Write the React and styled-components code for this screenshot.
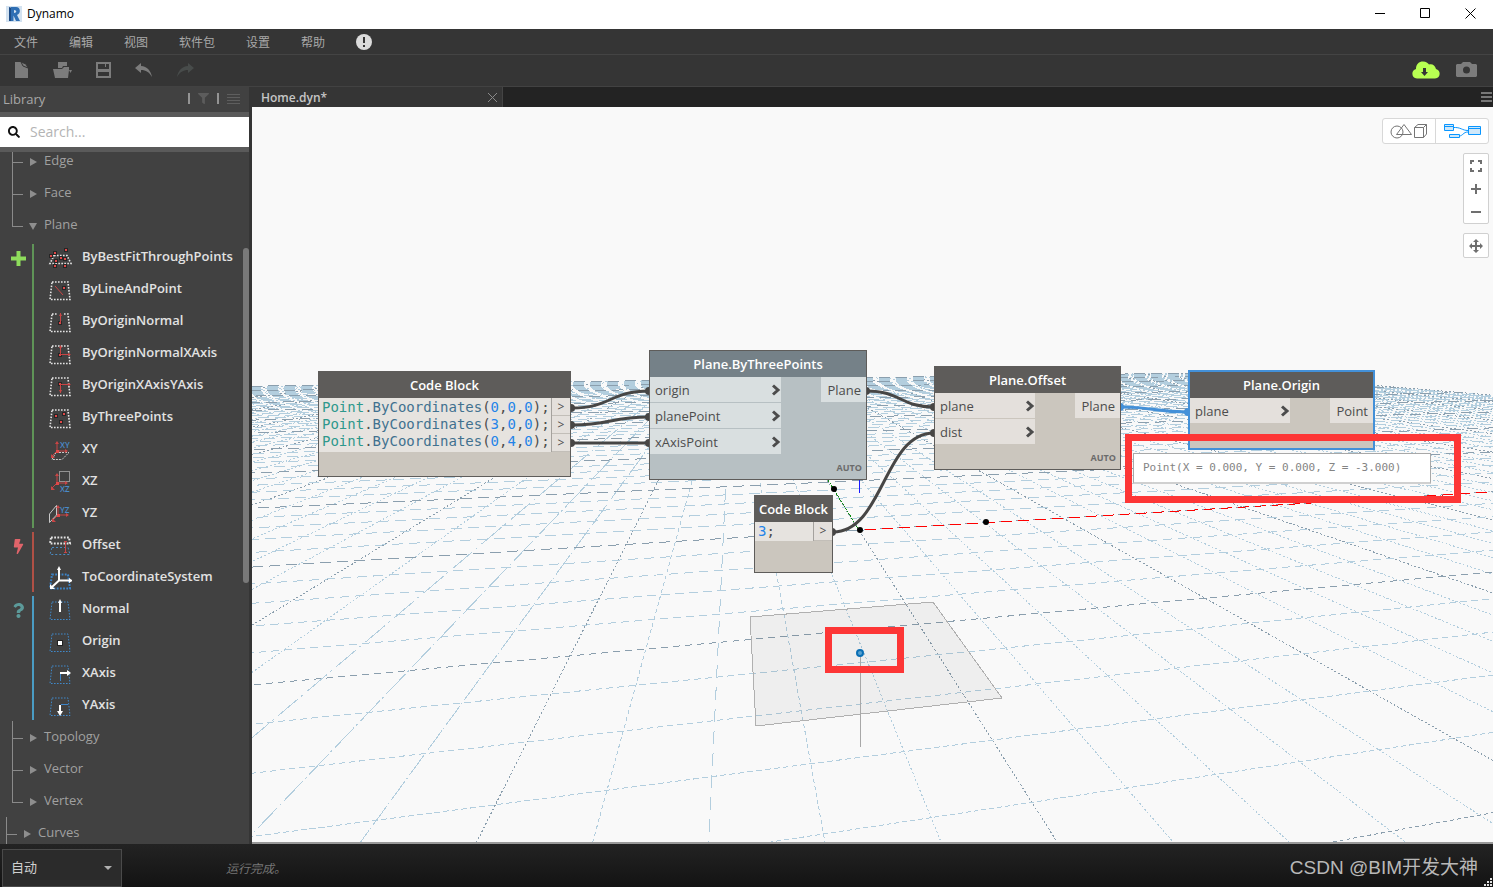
import styled, { createGlobalStyle } from "styled-components";
import { FaSearch, FaFilter, FaPlus, FaBolt, FaQuestion } from "react-icons/fa";

const LIGHT = "#b3cede";
const DARK = "#8b9fae";

const PROJ = { w0: 0.005043, wx: 0.000067, wy: 0.0003241, vx: 3878, vy: 481 };
const HORIZON = 225;

// grid plane -> canvas
function project(x, y) {
  const w = PROJ.w0 + PROJ.wx * x + PROJ.wy * y;
  const num = 607 * PROJ.w0 + x * PROJ.wx * PROJ.vx + y * PROJ.wy * PROJ.vy;
  return [num / w, HORIZON + 1 / w];
}

const steepDash = {
  "-3": "13 9",
  "-2": "4 3",
  "-4": "4 3",
  "-6": "24 4 1 2",
  "-7": "28 4 2 3",
  "-8": "26 6 2 4",
};

function buildGrid() {
  const lines = [];
  for (let k = -50; k <= 50; k++) {
    const yNear = (0.0018 - PROJ.w0 - PROJ.wx * k) / PROJ.wy;
    const [x1, y1] = project(k, 50);
    const [x2, y2] = project(k, yNear);
    lines.push({
      id: "x" + k,
      x1,
      y1,
      x2,
      y2,
      dash: k % 5 !== 0 && steepDash[k] ? steepDash[k] : "2 2",
      offset: 0,
      major: k % 5 === 0,
    });
  }
  for (let j = -12; j <= 50; j++) {
    const xNear = Math.max(-50, (0.0015 - PROJ.w0 - PROJ.wy * j) / PROJ.wx);
    if (xNear > 49) continue;
    const [x1, y1] = project(50, j);
    const [x2, y2] = project(xNear, j);
    const period = Math.min(17, 17 + j);
    const on = Math.round(period * 0.62);
    lines.push({
      id: "y" + j,
      x1,
      y1,
      x2,
      y2,
      dash: `${on} ${period - on}`,
      offset: (j + 12) * 7,
      major: j % 5 === 0,
    });
  }
  return lines;
}

const gridLines = buildGrid();

const wires = [
  [320, 301, 397, 284],
  [320, 318, 397, 310],
  [320, 336, 397, 336],
  [615, 284, 682, 300],
  [581, 425, 682, 326],
  [869, 300, 936, 305, "#4390d8"],
];

function Wire({ points }) {
  const [x1, y1, x2, y2, color = "#474645"] = points;
  const mid = (x2 - x1) / 2;
  return (
    <g fill={color}>
      <path
        d={`M${x1} ${y1} C${x1 + mid} ${y1} ${x2 - mid} ${y2} ${x2} ${y2}`}
        fill="none"
        stroke={color}
        strokeWidth="3"
      />
      <path d={`M${x1 - 1} ${y1 - 4}a4 4 0 0 1 0 8z`} />
      <path d={`M${x2} ${y2 - 4}a4 4 0 0 0 0 8z`} />
    </g>
  );
}

function Scene() {
  return (
    <SceneSvg>
      <g shapeRendering="crispEdges">
        {gridLines.map((l) => (
          <line
            key={l.id}
            x1={l.x1}
            y1={l.y1}
            x2={l.x2}
            y2={l.y2}
            stroke={l.major ? DARK : LIGHT}
            strokeDasharray={l.dash}
            strokeDashoffset={l.offset}
          />
        ))}
        <polygon
          points="498,510 681,495 750,591 504,619"
          fill="#000000"
          fillOpacity="0.045"
          stroke="#b0b0b0"
        />
        <path d="M608 548V640" stroke="#a8a8a8" />
        <path d="M607 373V386" stroke="#1a1aff" />
        <path d="M576 373L607 423" stroke="#0a8a0a" strokeDasharray="2 1" />
        <path d="M613 423L1241 385" stroke="#ff0000" strokeDasharray="11 6" />
      </g>
      <g fill="#000000">
        <circle cx="582" cy="382" r="3" />
        <circle cx="608" cy="423" r="3" />
        <circle cx="734" cy="415" r="3" />
      </g>
      <circle cx="608" cy="546" r="3" fill="#5aa2cf" stroke="#0a6fb5" strokeWidth="2" />
      {wires.map((w) => (
        <Wire key={w.join()} points={w} />
      ))}
    </SceneSvg>
  );
}

const IconText = styled.text`
  fill: #4a8ac8;
  font-size: 8px;
  font-weight: 600;
`;

function Frame({ color = "#e4e4e4", width = 1.6 }) {
  return (
    <path
      d="M4 4H20L22 21.500H2z"
      fill="none"
      stroke={color}
      strokeWidth={width}
      strokeDasharray="1.6 1.4"
    />
  );
}

function Dots({ at }) {
  return at.map(([x, y]) => (
    <g key={x + "," + y}>
      <rect x={x - 2} y={y - 2} width="4" height="4" fill="#262626" />
      <rect x={x - 1} y={y - 1} width="2" height="2" fill="#e04848" />
    </g>
  ));
}

const red = { stroke: "#c94545", strokeWidth: 1, fill: "none" };

function Tripod({ x, y }) {
  return (
    <g>
      <path d={`M${x} ${y - 9}V${y}H${x + 10}M${x} ${y}l-5 5`} {...red} />
      <path
        d={`M${x - 2} ${y - 7}l2-3 2 3zM${x + 8} ${y - 2}l3 2-3 2zM${x - 6} ${y + 3}v4h4z`}
        fill="#c94545"
      />
      <rect x={x - 1} y={y - 1} width="3" height="3" fill="#e04848" />
    </g>
  );
}

const itemIcons = {
  ByBestFitThroughPoints: (
    <>
      <path
        d="M6 9.500H19L23 17.500H2z"
        fill="none"
        stroke="#e4e4e4"
        strokeWidth="1.6"
        strokeDasharray="1.6 1.4"
      />
      <Dots at={[[18, 4], [7, 7], [3, 10], [13, 12], [17, 13], [8, 15], [7, 20], [17, 20]]} />
    </>
  ),
  ByLineAndPoint: (
    <>
      <Frame />
      <path d="M7 8L15 17" {...red} />
      <Dots at={[[16, 10]]} />
    </>
  ),
  ByOriginNormal: (
    <>
      <Frame />
      <rect x="10" y="0" width="5" height="8" fill="#414141" />
      <Dots at={[[12, 13]]} />
      <path d="M12.500 3V13" {...red} />
      <path d="M11 6l1.500-3L14 6z" fill="#c94545" />
    </>
  ),
  ByOriginNormalXAxis: (
    <>
      <Frame />
      <Dots at={[[12, 13]]} />
      <path d="M12.500 4V12.500H21" {...red} />
      <path d="M11 6l1.500-3L14 6zM20 11l3 1.500-3 1.500z" fill="#c94545" />
    </>
  ),
  ByOriginXAxisYAxis: (
    <>
      <Frame />
      <Dots at={[[12, 10]]} />
      <path d="M12.500 19V10.500H21" {...red} />
      <path d="M11 16l1.500 3L14 16zM20 9l3 1.500-3 1.500z" fill="#c94545" />
    </>
  ),
  ByThreePoints: (
    <>
      <Frame />
      <Dots at={[[8, 10], [16, 8], [13, 16]]} />
    </>
  ),
  XY: (
    <>
      <path d="M8 14.500H21L14 21.500H4z" fill="none" stroke="#c8c8c8" strokeDasharray="2 1" />
      <Tripod x={9} y={13} />
      <IconText x="12" y="10">XY</IconText>
    </>
  ),
  XZ: (
    <>
      <path d="M11.500 1.500H21.500V11.500H11.500z" fill="none" stroke="#e4e4e4" strokeDasharray="1 1" />
      <Tripod x={9} y={13} />
      <IconText x="12" y="22">XZ</IconText>
    </>
  ),
  YZ: (
    <>
      <path d="M1.500 12L8.500 3.500V13L1.500 20.500z" fill="none" stroke="#c8c8c8" />
      <Tripod x={10} y={13} />
      <IconText x="12" y="11">YZ</IconText>
    </>
  ),
  Offset: (
    <>
      <path d="M4 13.500H20L22 20.500H2z" fill="none" stroke="#4a8ac0" strokeDasharray="2 2" />
      <path
        d="M3 3.500H21L22 9.500H2z"
        fill="none"
        stroke="#e4e4e4"
        strokeWidth="2"
        strokeDasharray="1.800 1.400"
      />
      <path d="M17.500 7V18M16 7.500H19M16 18.500H19" {...red} />
    </>
  ),
  ToCoordinateSystem: (
    <>
      <path
        d="M4 8.500H20L22 22.500H2z"
        fill="none"
        stroke="#3c84c8"
        strokeWidth="2"
        strokeDasharray="1.800 1.400"
      />
      <path d="M11 3V14.500H22M11 14.500L4 21" fill="none" stroke="#ffffff" strokeWidth="2" />
      <path d="M9 4l2-4 2 4zM21 12l4 2.500-4 2.500zM2 23v-5l5 5z" fill="#ffffff" />
    </>
  ),
  Normal: (
    <>
      <Frame color="#4088c8" width={1} />
      <path d="M12 4V14" stroke="#ffffff" strokeWidth="2" />
      <path d="M10 5l2-4 2 4z" fill="#ffffff" />
    </>
  ),
  Origin: (
    <>
      <Frame color="#4088c8" width={1} />
      <rect x="9" y="10" width="6" height="6" fill="#222222" />
      <rect x="10" y="11" width="4" height="4" fill="#ffffff" />
    </>
  ),
  XAxis: (
    <>
      <Frame color="#4088c8" width={1} />
      <path d="M12.500 12V19" stroke="#3c84c8" />
      <path d="M12 11H20" stroke="#ffffff" strokeWidth="2" />
      <path d="M19 8l4 3-4 3z" fill="#ffffff" />
    </>
  ),
  YAxis: (
    <>
      <Frame color="#4088c8" width={1} />
      <path d="M13 10.500H20" stroke="#3c84c8" />
      <path d="M12 11V18" stroke="#ffffff" strokeWidth="2" />
      <path d="M9 17l3 5 3-5z" fill="#ffffff" />
    </>
  ),
};

const groups = [
  {
    color: "#5f9457",
    sign: (
      <svg width="15" height="15" viewBox="0 0 15 15" stroke="#8edc5c" strokeWidth="4">
        <path d="M7.500 0V15M0 7.500H15" />
      </svg>
    ),
    items: [
      "ByBestFitThroughPoints",
      "ByLineAndPoint",
      "ByOriginNormal",
      "ByOriginNormalXAxis",
      "ByOriginXAxisYAxis",
      "ByThreePoints",
      "XY",
      "XZ",
      "YZ",
    ],
  },
  {
    color: "#b05045",
    sign: <FaBolt size={15} color="#e0646a" />,
    items: ["Offset", "ToCoordinateSystem"],
  },
  {
    color: "#4a9cc4",
    sign: <FaQuestion size={15} color="#5c9a9a" />,
    items: ["Normal", "Origin", "XAxis", "YAxis"],
  },
];

function Category({ name, open, last, root }) {
  return (
    <CategoryRow $root={root}>
      <Branch $last={last} />
      <svg width="10" height="10" viewBox="0 0 10 10" fill="#8e8e8e">
        <path d={open ? "M0 2H8L4 9z" : "M1 1L8 5 1 9z"} />
      </svg>
      {name}
    </CategoryRow>
  );
}

function Library() {
  return (
    <Sidebar>
      <LibraryHeader>
        <LibraryTitle>Library</LibraryTitle>
        <HeaderBar />
        <FaFilter size={11} color="#5c5c5c" />
        <HeaderBar />
        <svg width="13" height="10" viewBox="0 0 13 10">
          <path d="M0 .5H13M0 3.500H13M0 6.500H13M0 9.500H13" stroke="#5e5e5e" />
        </svg>
      </LibraryHeader>
      <SearchBox>
        <FaSearch size={12} color="#111111" />
        <input type="text" aria-label="Search" placeholder="Search..." />
      </SearchBox>
      <Tree>
        <TreeContent>
          <Category name="Edge" />
          <Category name="Face" />
          <Category name="Plane" open last />
          {groups.map((g) => (
            <Group key={g.color}>
              <Sign>{g.sign}</Sign>
              <GroupBar $color={g.color} />
              <Items>
                {g.items.map((item) => (
                  <Item key={item}>
                    <svg width="24" height="24" viewBox="0 0 24 24">
                      {itemIcons[item]}
                    </svg>
                    {item}
                  </Item>
                ))}
              </Items>
            </Group>
          ))}
          <Category name="Topology" />
          <Category name="Vector" />
          <Category name="Vertex" last />
          <Category name="Curves" root />
        </TreeContent>
        <ScrollThumb />
      </Tree>
    </Sidebar>
  );
}

function Port({ name, width }) {
  return (
    <InPort $width={width}>
      {name}
      <svg width="9" height="12" viewBox="0 0 9 12">
        <path d="M1 1.500L6 6 1 10.500" fill="none" stroke="#4c4c4c" strokeWidth="3" />
      </svg>
    </InPort>
  );
}

function FunctionNode({ title, inputs, output, auto, portWidth = 100, ...rest }) {
  return (
    <Node {...rest}>
      <NodeTitle>{title}</NodeTitle>
      <Ports>
        <PortColumn>
          {inputs.map((name) => (
            <Port key={name} name={name} width={portWidth} />
          ))}
        </PortColumn>
        <OutPort>{output}</OutPort>
      </Ports>
      {auto && <Auto>AUTO</Auto>}
    </Node>
  );
}

function PointCall({ args }) {
  return (
    <div>
      <Code $c="#2e988c">Point</Code>.<Code $c="#41718f">ByCoordinates</Code>(
      {args.map((a, i) => (
        <span key={i}>
          {i > 0 && ","}
          <Code $c="#2484e8">{a}</Code>
        </span>
      ))}
      );
    </div>
  );
}

function Workspace() {
  return (
    <Canvas>
      <Scene />
      <Node $x={66} $y={264} $w={253} $h={106}>
        <NodeTitle>Code Block</NodeTitle>
        <CodeRow>
          <CodeText>
            <PointCall args={[0, 0, 0]} />
            <PointCall args={[3, 0, 0]} />
            <PointCall args={[0, 4, 0]} />
          </CodeText>
          <CodePorts>
            <span>&gt;</span>
            <span>&gt;</span>
            <span>&gt;</span>
          </CodePorts>
        </CodeRow>
      </Node>
      <FunctionNode
        $x={397}
        $y={243}
        $w={218}
        $h={130}
        $frozen
        title="Plane.ByThreePoints"
        inputs={["origin", "planePoint", "xAxisPoint"]}
        output="Plane"
        portWidth={131}
        auto
      />
      <Node $x={502} $y={388} $w={79} $h={78}>
        <NodeTitle>Code Block</NodeTitle>
        <CodeRow>
          <CodeText>
            <Code $c="#2484e8">3</Code>;
          </CodeText>
          <CodePorts>
            <span>&gt;</span>
          </CodePorts>
        </CodeRow>
      </Node>
      <FunctionNode
        $x={682}
        $y={259}
        $w={187}
        $h={104}
        title="Plane.Offset"
        inputs={["plane", "dist"]}
        output="Plane"
        auto
      />
      <FunctionNode
        $x={937}
        $y={264}
        $w={185}
        $h={78}
        $selected
        title="Plane.Origin"
        inputs={["plane"]}
        output="Point"
      />
      <Preview>Point(X = 0.000, Y = 0.000, Z = -3.000)</Preview>
      <Marker $x={873} $y={327} $w={336} $h={69} />
      <Marker $x={573} $y={520} $w={79} $h={46} />
      <ViewControls>
        <ModeSwitch>
          <button aria-label="3D preview">
            <svg width="38" height="16" viewBox="0 0 38 16" fill="none" stroke="#757575">
              <circle cx="7" cy="9" r="6" />
              <path d="M14 1.500L21.500 11.500H6.500zM24.500 4.500H33.500V14.500H24.500zM24.500 4.500L28 1.500H36.500L33.500 4.500M36.500 1.500V11L33.500 14.500" />
            </svg>
          </button>
          <button aria-label="Graph view">
            <svg width="38" height="16" viewBox="0 0 38 16" fill="#cfe8fa" stroke="#0a96ff">
              <path d="M10 4.500C18 4 19 7.500 25 7.500M16 13C20 13 20 9 25 9" fill="none" />
              <path d="M1.500 1.500H10.500V7.500H1.500zM1.500 3.500H10.500M6.500 11.500H16.500V14.500H6.500zM25.500 3.500H37.500V11.500H25.500zM25.500 5.500H37.500" />
            </svg>
          </button>
        </ModeSwitch>
        <ZoomPanel>
          <button aria-label="Fit">
            <svg width="14" height="14" viewBox="0 0 14 14" fill="none" stroke="#6f6f6f" strokeWidth="2">
              <path d="M2 5V2H5M9 2H12V5M12 9V12H9M5 12H2V9" />
            </svg>
          </button>
          <button aria-label="Zoom in">
            <svg width="10" height="10" viewBox="0 0 10 10" stroke="#6f6f6f" strokeWidth="2">
              <path d="M5 0V10M0 5H10" />
            </svg>
          </button>
          <button aria-label="Zoom out">
            <svg width="10" height="10" viewBox="0 0 10 10" stroke="#6f6f6f" strokeWidth="2">
              <path d="M0 5H10" />
            </svg>
          </button>
        </ZoomPanel>
        <ZoomPanel>
          <button aria-label="Pan">
            <svg width="14" height="14" viewBox="0 0 14 14" fill="#6f6f6f">
              <path d="M6 3H4L7 0 10 3H8V6H11V4L14 7 11 10V8H8V11H10L7 14 4 11H6V8H3V10L0 7 3 4V6H6z" />
            </svg>
          </button>
        </ZoomPanel>
      </ViewControls>
    </Canvas>
  );
}

export default function App() {
  return (
    <Window>
      <GlobalStyle />
      <TitleBar>
        <svg width="16" height="16" viewBox="0 0 16 16">
          <rect width="16" height="16" fill="#d3e2f0" />
          <path d="M3 1L6 2V15H3z" fill="#1d4c86" />
          <path
            d="M4 1H10C15 1 15 8 11 9L14 15H10L7.500 9.500V15H5V1M8 4V7C11 7 11 4 8 4z"
            fill="#2f6fb4"
            fillRule="evenodd"
          />
        </svg>
        <h1>Dynamo</h1>
        <WindowButton aria-label="Minimize">
          <svg width="11" height="11" viewBox="0 0 11 11" stroke="#000000">
            <path d="M0 5.500H10" />
          </svg>
        </WindowButton>
        <WindowButton aria-label="Maximize">
          <svg width="11" height="11" viewBox="0 0 11 11" stroke="#000000" fill="none">
            <path d="M.5 .5H9.500V9.500H.5z" />
          </svg>
        </WindowButton>
        <WindowButton aria-label="Close">
          <svg width="11" height="11" viewBox="0 0 11 11" stroke="#000000">
            <path d="M.5 .5L10.500 10.500M10.500 .5L.5 10.500" />
          </svg>
        </WindowButton>
      </TitleBar>
      <MenuBar>
        {["文件", "编辑", "视图", "软件包", "设置", "帮助"].map((m) => (
          <button key={m}>{m}</button>
        ))}
        <button aria-label="Notifications">
          <svg width="16" height="16" viewBox="0 0 16 16">
            <circle cx="8" cy="8" r="8" fill="#dcdcdc" />
            <path d="M7 3H9V9H7zM7 11H9V13H7z" fill="#353535" />
          </svg>
        </button>
      </MenuBar>
      <ToolBar>
        <ToolButton aria-label="New">
          <svg width="18" height="18" viewBox="0 0 18 18" fill="#7c7c7c">
            <path d="M3 1H10L16 7V17H3z" />
            <path d="M9 1L11 5 16 7M9 1L14 3 16 7" stroke="#353535" fill="#7c7c7c" />
          </svg>
        </ToolButton>
        <ToolButton aria-label="Open">
          <svg width="20" height="18" viewBox="0 0 20 18" fill="#7c7c7c">
            <path d="M6 1H15V5H11L10 7H6zM1 8H10L12 6H17V9L16 17H3z" />
            <path d="M17 9H20L18.500 12z" />
          </svg>
        </ToolButton>
        <ToolButton aria-label="Save">
          <svg width="18" height="18" viewBox="0 0 18 18">
            <path
              d="M2 1H17V17H2zM4 3V8H15V3H12V6H11V3zM4 11V15H15V11z"
              fill="#7c7c7c"
              fillRule="evenodd"
            />
          </svg>
        </ToolButton>
        <ToolButton aria-label="Undo">
          <svg width="18" height="16" viewBox="0 0 18 16" fill="#7c7c7c">
            <path d="M0 6L6 1V4C12 4 16 9 17 15C14 10 11 8 6 8V11z" />
          </svg>
        </ToolButton>
        <ToolButton aria-label="Redo">
          <svg width="18" height="16" viewBox="0 0 18 16" fill="#484c4b">
            <path d="M18 6L12 1V4C6 4 2 9 1 15C4 10 7 8 12 8V11z" />
          </svg>
        </ToolButton>
        <ToolSpacer />
        <ToolButton aria-label="Download update">
          <svg width="28" height="18" viewBox="0 0 28 18">
            <path
              d="M5 17.500C-1 17-1 9 4 8C4 3 7 .5 11 .5C14 .5 16 2 17 3.500C20 2.500 23 4 24 8C29 9 29 17 23 17.500z"
              fill="#b8ff52"
            />
            <path d="M11 7H14V11H16L12.500 15 9 11H11z" fill="#353535" />
          </svg>
        </ToolButton>
        <ToolButton aria-label="Export image">
          <svg width="21" height="15" viewBox="0 0 21 15">
            <path
              d="M1 2H5L7 0H14L16 2H20L21 3V14L20 15H1L0 14V3zM10.500 4.500A3.500 3.500 0 1 0 10.500 11.500A3.500 3.500 0 1 0 10.500 4.500z"
              fill="#7c7c7c"
              fillRule="evenodd"
            />
          </svg>
        </ToolButton>
      </ToolBar>
      <Main>
        <Library />
        <Work>
          <TabBar>
            <Tab>
              Home.dyn*
              <button aria-label="Close tab">
                <svg width="9" height="9" viewBox="0 0 9 9" stroke="#8a8a8a">
                  <path d="M0 0L9 9M9 0L0 9" />
                </svg>
              </button>
            </Tab>
            <TabMenu aria-label="Tab list">
              <svg width="11" height="10" viewBox="0 0 11 10" stroke="#777777" strokeWidth="2">
                <path d="M0 1H11M0 5H11M0 9H11" />
              </svg>
            </TabMenu>
          </TabBar>
          <Workspace />
        </Work>
      </Main>
      <StatusBar>
        <RunMode>
          <select aria-label="运行模式" defaultValue="auto">
            <option value="auto">自动</option>
          </select>
          <svg width="8" height="4" viewBox="0 0 8 4" fill="#b0b0b0">
            <path d="M0 0H8L4 4z" />
          </svg>
        </RunMode>
        <RunStatus>运行完成。</RunStatus>
        <Watermark>CSDN @BIM开发大神</Watermark>
        <Grip width="9" height="9" viewBox="0 0 9 9" fill="#e0e0e0">
          <path d="M6 0h2v2H6zM3 3h2v2H3zM6 3h2v2H6zM0 6h2v2H0zM3 6h2v2H3zM6 6h2v2H6z" />
        </Grip>
      </StatusBar>
    </Window>
  );
}

const GlobalStyle = createGlobalStyle`
  * {
    box-sizing: border-box;
  }

  body {
    margin: 0;
    font-family: "Open Sans", "Noto Sans CJK SC", sans-serif;
  }

  button {
    margin: 0;
    padding: 0;
    border: none;
    background: none;
    color: inherit;
    font: inherit;
    cursor: pointer;
  }
`;

const Window = styled.div`
  display: flex;
  flex-direction: column;
  height: 100vh;
  overflow: hidden;
  background: #353535;
`;

const TitleBar = styled.header`
  display: flex;
  align-items: center;
  flex-shrink: 0;
  height: 29px;
  padding: 0 0 2px 6px;
  background: #ffffff;

  h1 {
    flex: 1;
    margin: 0 0 0 5px;
    font-size: 12px;
    font-weight: 400;
    line-height: 18px;
  }
`;

const WindowButton = styled.button`
  display: flex;
  align-items: center;
  justify-content: center;
  width: 45px;
  height: 26px;
`;

const MenuBar = styled.nav`
  display: flex;
  align-items: center;
  flex-shrink: 0;
  gap: 31px;
  height: 26px;
  padding-left: 14px;
  border-bottom: 1px solid #444444;
  color: #a8a8a8;
  font-family: "Noto Sans CJK SC", sans-serif;
  font-size: 12px;

  svg {
    display: block;
  }
`;

const ToolBar = styled.div`
  display: flex;
  align-items: center;
  flex-shrink: 0;
  height: 31px;
  padding: 0 6px 2px 0;
`;

const ToolButton = styled.button`
  display: flex;
  align-items: center;
  justify-content: center;
  width: 41px;
  height: 28px;
`;

const ToolSpacer = styled.div`
  flex: 1;
`;

const Main = styled.div`
  display: flex;
  flex: 1;
  min-height: 0;
  border-top: 1px solid #424242;
`;

const Sidebar = styled.aside`
  display: flex;
  flex-direction: column;
  width: 249px;
  margin-right: 3px;
  background: #414141;
`;

const LibraryHeader = styled.div`
  display: flex;
  align-items: center;
  flex-shrink: 0;
  gap: 8px;
  height: 25px;
  padding: 0 9px 2px 3px;
`;

const LibraryTitle = styled.span`
  flex: 1;
  color: #a8a8a8;
  font-size: 13px;
`;

const HeaderBar = styled.i`
  width: 2px;
  height: 11px;
  background: #949494;
`;

const SearchBox = styled.label`
  display: flex;
  align-items: center;
  flex-shrink: 0;
  gap: 10px;
  height: 40px;
  padding: 0 8px;
  border: solid #5a5a5a;
  border-width: 5px 0;
  background: #ffffff;

  input {
    flex: 1;
    min-width: 0;
    padding: 0 0 2px;
    border: none;
    outline: none;
    background: none;
    font: inherit;
    font-size: 14px;
  }

  input::placeholder {
    color: #b4b4b4;
    opacity: 1;
  }
`;

const Tree = styled.div`
  position: relative;
  flex: 1;
  min-height: 0;
  overflow: hidden;
`;

const TreeContent = styled.div`
  margin-top: -7px;
`;

const ScrollThumb = styled.div`
  position: absolute;
  top: 96px;
  right: 0;
  width: 6px;
  height: 335px;
  border-radius: 3px;
  background: #797979;
`;

const CategoryRow = styled.button`
  display: flex;
  align-items: center;
  width: 100%;
  height: 32px;
  padding-bottom: 2px;
  padding-left: ${(props) => (props.$root ? "6px" : "12px")};
  color: #a0a0a0;
  font-size: 13px;

  svg {
    margin: 4px 5px 0;
  }
`;

const Branch = styled.i`
  align-self: flex-start;
  position: relative;
  width: 12px;
  height: ${(props) => (props.$last ? "18px" : "32px")};
  border-left: 1px solid #8a8a8a;

  &::after {
    content: "";
    position: absolute;
    top: 17px;
    left: 0;
    width: 10px;
    border-top: 1px solid #8a8a8a;
  }
`;

const Group = styled.div`
  display: flex;
`;

const Sign = styled.div`
  display: flex;
  align-items: center;
  justify-content: center;
  width: 32px;
  height: 34px;
  padding-left: 4px;
`;

const GroupBar = styled.div`
  width: 2px;
  margin: 3px 0 1px;
  background: ${(props) => props.$color};
`;

const Items = styled.div`
  flex: 1;
`;

const Item = styled.button`
  display: flex;
  align-items: center;
  gap: 10px;
  width: 100%;
  height: 32px;
  padding: 0 0 2px 14px;
  color: #e2e2e2;
  font-size: 13px;
  font-weight: 600;

  svg {
    margin-top: 4px;
  }
`;

const Work = styled.main`
  display: flex;
  flex-direction: column;
  flex: 1;
  min-width: 0;
`;

const TabBar = styled.div`
  display: flex;
  align-items: center;
  justify-content: space-between;
  flex-shrink: 0;
  height: 20px;
  background: #232323;
`;

const Tab = styled.div`
  display: flex;
  align-items: center;
  justify-content: space-between;
  width: 251px;
  height: 20px;
  padding: 0 5px 0 9px;
  border-right: 1px solid #444444;
  background: #353535;
  color: #c6c6c6;
  font-size: 12px;
  font-weight: 600;

  svg {
    display: block;
  }
`;

const TabMenu = styled.button`
  display: flex;
  padding-right: 1px;
`;

const Canvas = styled.section`
  position: relative;
  flex: 1;
  overflow: hidden;
  border-bottom: 2px solid #999999;
  background: #f9f9f9;
`;

const SceneSvg = styled.svg`
  position: absolute;
  inset: 0;
  width: 100%;
  height: 100%;
`;

const Node = styled.div`
  --title: ${(props) => (props.$frozen ? "#758188" : "#5e5c5a")};
  --port: ${(props) => (props.$frozen ? "#d9dfe0" : "#e4e0dc")};
  position: absolute;
  left: ${(props) => props.$x}px;
  top: ${(props) => props.$y}px;
  width: ${(props) => props.$w}px;
  height: ${(props) => props.$h}px;
  border: 1px solid #5e5c5a;
  border-color: ${(props) => (props.$selected ? "#4390d8" : "#5e5c5a")};
  outline: ${(props) => (props.$selected ? "1px solid #4390d8" : "none")};
  background: ${(props) => (props.$frozen ? "#b7c0c3" : "#cbc6be")};
  color: #4c4c4c;
  font-size: 13px;
`;

const NodeTitle = styled.h2`
  margin: 0;
  height: 26px;
  background: var(--title);
  color: #ffffff;
  font-size: 13px;
  font-weight: 600;
  line-height: 26px;
  text-align: center;
  white-space: nowrap;
`;

const Ports = styled.div`
  display: flex;
  align-items: flex-start;
  justify-content: space-between;
`;

const PortColumn = styled.div`
  display: flex;
  flex-direction: column;
  gap: 1px;
`;

const InPort = styled.div`
  display: flex;
  align-items: center;
  justify-content: space-between;
  width: ${(props) => props.$width}px;
  height: 25px;
  padding: 0 0 0 5px;
  background: var(--port);
`;

const OutPort = styled.div`
  height: 25px;
  padding: 0 5px 0 6px;
  background: var(--port);
  line-height: 26px;
`;

const Auto = styled.span`
  position: absolute;
  right: 4px;
  bottom: 4px;
  color: #6b6b6b;
  font-size: 9px;
  font-weight: 700;
  line-height: 14px;
`;

const CodeRow = styled.div`
  display: flex;
`;

const CodeText = styled.div`
  flex: 1;
  padding: 1px 0 1px 3px;
  background: #e6e3df;
  font-family: "DejaVu Sans Mono", "Liberation Mono", monospace;
  font-size: 14px;
  line-height: 17px;
  white-space: nowrap;
`;

const Code = styled.span`
  color: ${(props) => props.$c};
`;

const CodePorts = styled.div`
  display: flex;
  flex-direction: column;
  width: 19px;
  border-left: 1px solid #a5a29e;
  background: #e4e0dc;

  span {
    flex: 1;
    border-bottom: 1px solid #c2beb8;
    font-size: 12px;
    line-height: 17px;
    text-align: center;
  }
`;

const Preview = styled.div`
  position: absolute;
  left: 881px;
  top: 346px;
  width: 298px;
  height: 31px;
  padding-left: 9px;
  border: 1px solid #a8a8a8;
  border-bottom: 2px solid #d0d0d0;
  background: #ffffff;
  color: #848484;
  font-family: "DejaVu Sans Mono", "Liberation Mono", monospace;
  font-size: 11px;
  line-height: 27px;
  white-space: nowrap;
`;

const Marker = styled.div`
  position: absolute;
  left: ${(props) => props.$x}px;
  top: ${(props) => props.$y}px;
  width: ${(props) => props.$w}px;
  height: ${(props) => props.$h}px;
  border: 7px solid #fd3636;
`;

const ViewControls = styled.div`
  position: absolute;
  top: 11px;
  right: 4px;
  display: flex;
  flex-direction: column;
  align-items: flex-end;
  gap: 9px;
`;

const ModeSwitch = styled.div`
  display: flex;
  border: 1px solid #d8d8d8;
  border-radius: 3px;
  background: #ffffff;

  button {
    display: flex;
    align-items: center;
    justify-content: center;
    width: 52px;
    height: 24px;
  }

  button + button {
    width: 53px;
    border-left: 1px solid #d8d8d8;
  }
`;

const ZoomPanel = styled.div`
  display: flex;
  flex-direction: column;
  border: 1px solid #d0d0d0;
  border-radius: 2px;
  background: #ffffff;

  button {
    display: flex;
    align-items: center;
    justify-content: center;
    width: 24px;
    height: 23px;
  }
`;

const StatusBar = styled.footer`
  position: relative;
  display: flex;
  align-items: center;
  flex-shrink: 0;
  height: 43px;
  padding: 0 15px 0 2px;
  background: linear-gradient(#232323, #131313);
`;

const RunMode = styled.div`
  position: relative;
  align-self: flex-end;

  select {
    display: block;
    width: 120px;
    height: 38px;
    padding: 0 8px 3px;
    border: 1px solid #4a4a4a;
    border-radius: 0;
    appearance: none;
    background: #2b2b2b;
    color: #d0d0d0;
    font-family: "Noto Sans CJK SC", sans-serif;
    font-size: 13px;
  }

  svg {
    position: absolute;
    top: 17px;
    right: 10px;
    pointer-events: none;
  }
`;

const RunStatus = styled.span`
  flex: 1;
  margin: 4px 0 0 104px;
  color: #767676;
  font-family: "Noto Sans CJK SC", sans-serif;
  font-size: 12px;
  font-style: italic;
`;

const Watermark = styled.span`
  color: #b8b8b8;
  font-family: "Liberation Sans", "Noto Sans CJK SC", sans-serif;
  font-size: 19px;
`;

const Grip = styled.svg`
  position: absolute;
  right: 0;
  bottom: 0;
`;
